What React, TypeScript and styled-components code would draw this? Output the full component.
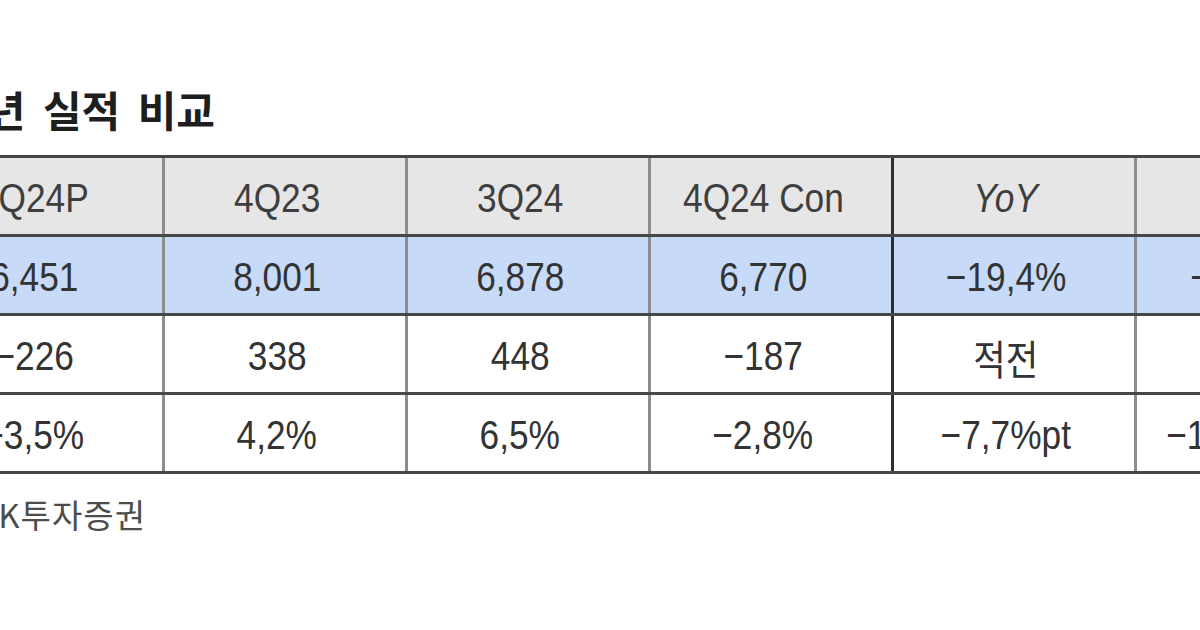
import styled, { createGlobalStyle } from "styled-components";

const GlobalStyle = createGlobalStyle`
  body {
    margin: 0;
    background: #ffffff;
    font-family: "Liberation Sans", "Noto Sans CJK KR", sans-serif;
  }
`;

const Page = styled.div`
  width: 1200px;
  height: 630px;
  overflow: hidden;
  background: #ffffff;
`;

// the capture is a crop of a wider report page, so the long title overflows to the left
const Title = styled.h2`
  display: flex;
  justify-content: flex-end;
  width: 215px;
  margin: 84px 0 0;
  white-space: nowrap;
  font-family: "Noto Sans CJK KR", sans-serif;
  font-size: 42px;
  font-weight: 700;
  line-height: 50px;
  word-spacing: 8px;
  color: #1e1e1e;
`;

const Table = styled.div`
  margin: 21px 0 0 -281px;
  width: 1640px;
  border-top: 3px solid #474747;
`;

const Row = styled.div<{ $tone: "head" | "highlight" | "plain" }>`
  display: grid;
  grid-template-columns: 200px repeat(5, 243px) 227px;
  height: 76px;
  border-bottom: 3px solid #474747;
  background: ${(p) =>
    p.$tone === "head" ? "#e6e6e6" : p.$tone === "highlight" ? "#c7dbf9" : "#ffffff"};
  color: ${(p) => (p.$tone === "head" ? "#3e3e3e" : "#333333")};
`;

const Cell = styled.div<{ $divider: "none" | "light" | "dark" }>`
  display: flex;
  align-items: center;
  justify-content: center;
  padding: 5px 16px 0 0;
  border-left: 3px solid
    ${(p) =>
      p.$divider === "dark" ? "#2e2e2e" : p.$divider === "light" ? "#8d8d8d" : "transparent"};
  font-size: 41px;
  white-space: nowrap;
`;

const Value = styled.span<{ $italic?: boolean }>`
  display: inline-block;
  transform: scaleX(0.86);
  font-style: ${(p) => (p.$italic ? "italic" : "normal")};
`;

const Source = styled.p`
  display: flex;
  justify-content: flex-end;
  width: 146px;
  margin: 20px 0 0;
  white-space: nowrap;
  font-family: "Noto Sans CJK KR", sans-serif;
  font-size: 33px;
  line-height: 40px;
  letter-spacing: 1px;
  color: #4d4d4d;
`;

const dividers: ("none" | "light" | "dark")[] = [
  "none",
  "light",
  "light",
  "light",
  "light",
  "dark",
  "light",
];

const header = ["(십억원)", "4Q24P", "4Q23", "3Q24", "4Q24 Con", "YoY", "QoQ"];

const rows: { tone: "highlight" | "plain"; cells: string[] }[] = [
  {
    tone: "highlight",
    cells: ["매출액", "6,451", "8,001", "6,878", "6,770", "−19,4%", "−6,2%"],
  },
  {
    tone: "plain",
    cells: ["영업이익", "−226", "338", "448", "−187", "적전", "적전"],
  },
  {
    tone: "plain",
    cells: ["영업이익률", "−3,5%", "4,2%", "6,5%", "−2,8%", "−7,7%pt", "−10,0%pt"],
  },
];

function App() {
  return (
    <Page>
      <GlobalStyle />
      <Title>표 1. 4Q24 실적, 컨센서스 및 전년 실적 비교</Title>
      <Table>
        <Row $tone="head">
          {header.map((h, i) => (
            <Cell key={h} $divider={dividers[i]}>
              <Value $italic={i >= 5}>{h}</Value>
            </Cell>
          ))}
        </Row>
        {rows.map((r) => (
          <Row key={r.cells[0]} $tone={r.tone}>
            {r.cells.map((c, i) => (
              <Cell key={i} $divider={dividers[i]}>
                <Value>{c}</Value>
              </Cell>
            ))}
          </Row>
        ))}
      </Table>
      <Source>자료: 회사 자료, IBK투자증권</Source>
    </Page>
  );
}

export default App;
